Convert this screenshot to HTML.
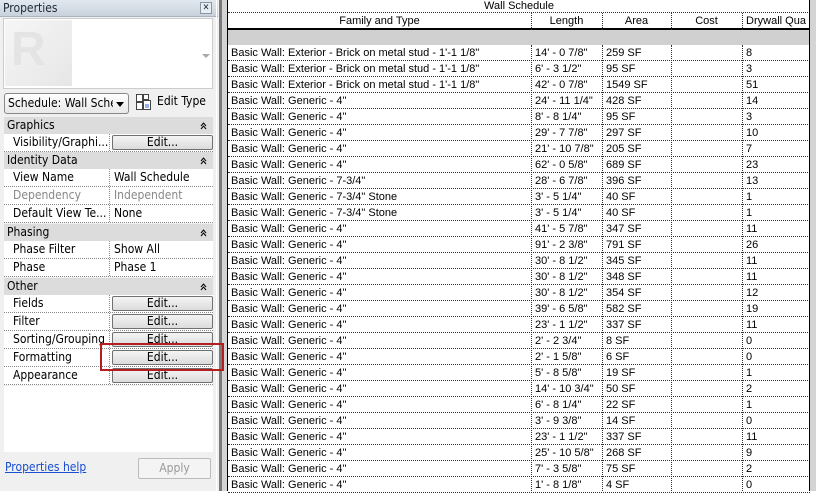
<!DOCTYPE html>
<html><head><meta charset="utf-8"><style>
*{margin:0;padding:0;box-sizing:border-box}
body{width:816px;height:491px;overflow:hidden;background:#fff;font-family:"DejaVu Sans Condensed","DejaVu Sans","Liberation Sans",sans-serif;font-size:11px;position:relative;color:#000}
.a{position:absolute}
#panel{left:0;top:0;width:220px;height:491px;background:#f0f0f0}
.title{left:0;top:0;width:218px;height:17px;background:linear-gradient(#e2e8ef,#c8d2dc);border-bottom:1px solid #aab4c0;font-size:12px;padding:0 0 0 3px;line-height:16px;color:#1e2a3a}
.row{position:absolute;left:4px;width:209px;height:18px;border-bottom:1px dotted #888;line-height:17px;font-size:12px;white-space:nowrap}
.row .k{position:absolute;left:9px;top:0}
.row .v{position:absolute;left:105px;top:0;height:17px;border-left:1px dotted #888;padding-left:4px;width:104px}
.hdr{background:#dcdcdc;border-bottom:none}
.hdr .k{left:3px}
.hdr svg{position:absolute;right:6px;top:5px}
.white{background:#fff}
.btn{position:absolute;left:2px;top:1px;width:101px;height:15px;border:1px solid #707070;border-radius:2px;background:linear-gradient(#f4f4f4,#dcdcdc);text-align:center;line-height:13px}
#sch{left:228px;top:0;width:582px;height:491px;font-family:"Liberation Sans",sans-serif;font-size:11px}
.tr{position:absolute;left:0;width:582px;height:16px;border-bottom:1px dotted #333}
.tr span{position:absolute;top:2px;white-space:nowrap}
.vl{position:absolute;top:13px;height:478px;border-left:1px dotted #333}
</style></head><body>
<div id="panel" class="a">
<div class="a title">Properties<span class="a" style="left:200px;top:2px;width:12px;height:12px;border:1px solid #8a96a6;background:#e8edf2;font-size:9px;line-height:10px;text-align:center">✕</span></div>
<div class="a" style="left:3px;top:18px;width:210px;height:71px;background:#fff;border:1px solid #ccc"></div>
<div class="a" style="left:5px;top:20px;width:67px;height:66px;background:linear-gradient(135deg,#f6f6f6,#e6e6e6);color:#e4e4e4;font-size:48px;font-weight:bold;line-height:60px;padding-left:6px;font-family:'Liberation Sans',sans-serif">R</div>
<div class="a" style="left:202px;top:54px;width:0;height:0;border-left:4px solid transparent;border-right:4px solid transparent;border-top:4px solid #aaa"></div>
<div class="a" style="left:4px;top:93px;width:125px;height:21px;border:1px solid #888;border-radius:3px;background:linear-gradient(#fff,#e8e8e8);font-size:12px;line-height:19px;padding-left:3px;overflow:hidden;white-space:nowrap"><span style="display:inline-block;width:105px;overflow:hidden">Schedule: Wall Sche</span><span class="a" style="left:111px;top:8px;border-left:4px solid transparent;border-right:4px solid transparent;border-top:5px solid #000"></span></div>
<svg class="a" style="left:136px;top:94px" width="16" height="17" viewBox="0 0 16 17"><rect x="0.5" y="0.5" width="6" height="7" fill="#fff" stroke="#444"/><rect x="0.5" y="8.5" width="6" height="7" fill="#fff" stroke="#444"/><rect x="7.5" y="0.5" width="5" height="5" fill="#fff" stroke="#444"/><rect x="7.5" y="6.5" width="7" height="9" fill="#fff" stroke="#444"/><path d="M9 11h4M9 13h4" stroke="#36c"/></svg>
<div class="a" style="left:157px;top:94px;font-size:12px">Edit Type</div>

<div class="row hdr" style="top:117px"><span class="k">Graphics</span><svg width="7" height="8"><path d="M1 4l2.5-3 2.5 3M1 7l2.5-3 2.5 3" fill="none" stroke="#000"/></svg></div>
<div class="row white" style="top:134px"><span class="k">Visibility/Graphi...</span><span class="v" style="padding:0"><span class="btn">Edit...</span></span></div>
<div class="row hdr" style="top:152px"><span class="k">Identity Data</span><svg width="7" height="8"><path d="M1 4l2.5-3 2.5 3M1 7l2.5-3 2.5 3" fill="none" stroke="#000"/></svg></div>
<div class="row white" style="top:169px"><span class="k">View Name</span><span class="v">Wall Schedule</span></div>
<div class="row white" style="top:187px;color:#888"><span class="k">Dependency</span><span class="v">Independent</span></div>
<div class="row white" style="top:205px"><span class="k">Default View Te...</span><span class="v">None</span></div>
<div class="row hdr" style="top:224px"><span class="k">Phasing</span><svg width="7" height="8"><path d="M1 4l2.5-3 2.5 3M1 7l2.5-3 2.5 3" fill="none" stroke="#000"/></svg></div>
<div class="row white" style="top:241px"><span class="k">Phase Filter</span><span class="v">Show All</span></div>
<div class="row white" style="top:259px"><span class="k">Phase</span><span class="v">Phase 1</span></div>
<div class="row hdr" style="top:278px"><span class="k">Other</span><svg width="7" height="8"><path d="M1 4l2.5-3 2.5 3M1 7l2.5-3 2.5 3" fill="none" stroke="#000"/></svg></div>
<div class="row white" style="top:295px"><span class="k">Fields</span><span class="v" style="padding:0"><span class="btn">Edit...</span></span></div>
<div class="row white" style="top:313px"><span class="k">Filter</span><span class="v" style="padding:0"><span class="btn">Edit...</span></span></div>
<div class="row white" style="top:331px"><span class="k">Sorting/Grouping</span><span class="v" style="padding:0"><span class="btn">Edit...</span></span></div>
<div class="row white" style="top:349px"><span class="k">Formatting</span><span class="v" style="padding:0"><span class="btn">Edit...</span></span></div>
<div class="row white" style="top:367px"><span class="k">Appearance</span><span class="v" style="padding:0"><span class="btn">Edit...</span></span></div>
<div class="a" style="left:4px;top:386px;width:209px;height:66px;background:#fff"></div>
<div class="a" style="left:5px;top:460px;color:#1a4fd0;text-decoration:underline;font-size:12px">Properties help</div>
<div class="a" style="left:138px;top:458px;width:73px;height:21px;border:1px solid #bbb;border-radius:2px;background:#f4f4f4;color:#999;text-align:center;line-height:19px;font-size:12px">Apply</div>
</div>
<div class="a" style="left:216px;top:0;width:1px;height:491px;background:#fff"></div>
<div class="a" style="left:219px;top:0;width:3px;height:491px;background:#7a7a7a"></div>
<div class="a" style="left:222px;top:0;width:5px;height:491px;background:#d4d4d4"></div>
<div class="a" style="left:227px;top:0;width:1px;height:491px;background:#000"></div>
<div class="a" style="left:810px;top:0;width:6px;height:491px;background:#d4d4d4"></div>
<div class="a" style="left:100px;top:343px;width:124px;height:28px;border:2px solid #b41e1e;z-index:5"></div>

<div id="sch" class="a">
<div class="tr" style="top:0;height:13px"><span style="left:0;width:582px;text-align:center;top:0">Wall Schedule</span></div>
<div class="tr" style="top:13px;height:17px;border-bottom:2px solid #000"><span style="left:0;width:303px;text-align:center">Family and Type</span><span style="left:303px;width:71px;text-align:center">Length</span><span style="left:374px;width:69px;text-align:center">Area</span><span style="left:443px;width:71px;text-align:center">Cost</span><span style="left:514px;width:68px;text-align:center">Drywall Qua</span></div>
<div class="a" style="left:0;top:30px;width:582px;height:15px;background:#d0d0d0"></div>
<div id="rows"></div>
<div class="vl" style="left:303px;height:17px"></div><div class="vl" style="left:374px;height:17px"></div><div class="vl" style="left:443px;height:17px"></div><div class="vl" style="left:514px;height:17px"></div>
<div class="vl" style="left:303px;top:45px;height:446px"></div><div class="vl" style="left:374px;top:45px;height:446px"></div><div class="vl" style="left:443px;top:45px;height:446px"></div><div class="vl" style="left:514px;top:45px;height:446px"></div>
<div class="a" style="left:581px;top:0;width:1px;height:491px;border-left:1px solid #000"></div>
</div>
<script>
var d=[["Basic Wall: Exterior - Brick on metal stud - 1'-1 1/8\"","14' - 0 7/8\"","259 SF","8"],
["Basic Wall: Exterior - Brick on metal stud - 1'-1 1/8\"","6' - 3 1/2\"","95 SF","3"],
["Basic Wall: Exterior - Brick on metal stud - 1'-1 1/8\"","42' - 0 7/8\"","1549 SF","51"],
["Basic Wall: Generic - 4\"","24' - 11 1/4\"","428 SF","14"],
["Basic Wall: Generic - 4\"","8' - 8 1/4\"","95 SF","3"],
["Basic Wall: Generic - 4\"","29' - 7 7/8\"","297 SF","10"],
["Basic Wall: Generic - 4\"","21' - 10 7/8\"","205 SF","7"],
["Basic Wall: Generic - 4\"","62' - 0 5/8\"","689 SF","23"],
["Basic Wall: Generic - 7-3/4\"","28' - 6 7/8\"","396 SF","13"],
["Basic Wall: Generic - 7-3/4\" Stone","3' - 5 1/4\"","40 SF","1"],
["Basic Wall: Generic - 7-3/4\" Stone","3' - 5 1/4\"","40 SF","1"],
["Basic Wall: Generic - 4\"","41' - 5 7/8\"","347 SF","11"],
["Basic Wall: Generic - 4\"","91' - 2 3/8\"","791 SF","26"],
["Basic Wall: Generic - 4\"","30' - 8 1/2\"","345 SF","11"],
["Basic Wall: Generic - 4\"","30' - 8 1/2\"","348 SF","11"],
["Basic Wall: Generic - 4\"","30' - 8 1/2\"","354 SF","12"],
["Basic Wall: Generic - 4\"","39' - 6 5/8\"","582 SF","19"],
["Basic Wall: Generic - 4\"","23' - 1 1/2\"","337 SF","11"],
["Basic Wall: Generic - 4\"","2' - 2 3/4\"","8 SF","0"],
["Basic Wall: Generic - 4\"","2' - 1 5/8\"","6 SF","0"],
["Basic Wall: Generic - 4\"","5' - 8 5/8\"","19 SF","1"],
["Basic Wall: Generic - 4\"","14' - 10 3/4\"","50 SF","2"],
["Basic Wall: Generic - 4\"","6' - 8 1/4\"","22 SF","1"],
["Basic Wall: Generic - 4\"","3' - 9 3/8\"","14 SF","0"],
["Basic Wall: Generic - 4\"","23' - 1 1/2\"","337 SF","11"],
["Basic Wall: Generic - 4\"","25' - 10 5/8\"","268 SF","9"],
["Basic Wall: Generic - 4\"","7' - 3 5/8\"","75 SF","2"],
["Basic Wall: Generic - 4\"","1' - 8 1/8\"","4 SF","0"]];
var h="";function e(s){return s.replace(/"/g,"&quot;")}
d.forEach(function(r,i){h+='<div class="tr" style="top:'+(45+i*16)+'px"><span style="left:3px">'+e(r[0])+'</span><span style="left:307px">'+e(r[1])+'</span><span style="left:378px">'+r[2]+'</span><span style="left:518px">'+r[3]+'</span></div>'});
document.getElementById("rows").innerHTML=h;
</script>
</body></html>
